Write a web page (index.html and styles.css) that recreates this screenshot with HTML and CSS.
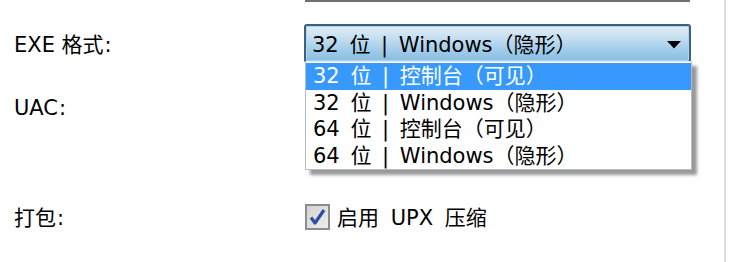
FILE: index.html
```html
<!DOCTYPE html>
<html lang="zh-CN">
<head>
<meta charset="utf-8">
<title>EXE 设置</title>
<link rel="stylesheet" href="styles.css">
</head>
<body>
<div class="panel">
  <div class="prev-field"></div>
  <div class="row row-exe">
    <span class="label">EXE 格式<span class="colon">:</span></span>
    <div class="select">
      <span class="select-value">32 位 | Windows（隐形）</span>
      <svg class="arrow" width="14" height="8" viewBox="0 0 14 8"><path d="M0 0H14L7 7.5Z" fill="#000"/></svg>
      <ul class="menu">
        <li class="item selected">32 位 | 控制台（可见）</li>
        <li class="item">32 位 | Windows（隐形）</li>
        <li class="item">64 位 | 控制台（可见）</li>
        <li class="item">64 位 | Windows（隐形）</li>
      </ul>
    </div>
  </div>
  <div class="row row-uac">
    <span class="label">UAC<span class="colon">:</span></span>
  </div>
  <div class="row row-pack">
    <span class="label">打包<span class="colon">:</span></span>
    <label class="check">
      <span class="box"><svg width="17" height="18" viewBox="0 0 17 18"><path d="M2 9.5L6 15L15 2" fill="none" stroke="#2c4f9e" stroke-width="3.2" stroke-linejoin="round"/></svg></span>
      <span class="check-text">启用 UPX 压缩</span>
    </label>
  </div>
</div>
</body>
</html>
```

FILE: styles.css
```css
html, body {
  margin: 0;
  padding: 0;
  background: #ffffff;
}
body {
  font-family: "DejaVu Sans", "Noto Sans CJK SC", sans-serif;
  font-size: 21px;
  line-height: 26px;
  color: #000;
}
.panel {
  width: 724px;
  height: 262px;
  border-right: 2px solid #d3dde7;
  box-sizing: content-box;
}
.prev-field {
  margin-left: 305px;
  width: 385px;
  height: 2px;
  background: #6f6f6f;
}
.row {
  display: grid;
  grid-template-columns: 290px 387px;
  align-items: center;
  height: 39px;
  padding-left: 14px;
}
.row-exe { margin-top: 22px; }
.row-uac { margin-top: 24px; }
.row-pack { margin-top: 71px; }
.label {
  white-space: nowrap;
  padding-top: 2px;
}
.colon {
  margin-left: 1px;
}
.select {
  position: relative;
  box-sizing: border-box;
  height: 39px;
  border: 2px solid #3a6383;
  border-radius: 3px;
  background: linear-gradient(#e2eff8 0%, #c4def0 35%, #a0cce9 70%, #86bde2 100%);
  box-shadow: inset 0 0 0 1px #b6d3e6;
  display: flex;
  align-items: center;
  padding-left: 6px;
  padding-right: 8px;
}
.select-value {
  flex: 1;
  white-space: nowrap;
  word-spacing: 4px;
  padding-top: 2px;
}
.arrow {
  margin-top: 3px;
}
.menu {
  position: absolute;
  top: 100%;
  left: -1px;
  width: 387px;
  box-sizing: border-box;
  margin: 0;
  padding: 1px 0 0;
  list-style: none;
  background: #fff;
  border: 1px solid #b4bccc;
  border-top-color: #dfe6ee;
  box-shadow: 5px 5px 3px rgba(0, 0, 0, 0.4);
}
.item {
  height: 26.6px;
  line-height: 27px;
  padding-left: 7px;
  white-space: nowrap;
  word-spacing: 4px;
}
.item.selected {
  background: #3899fd;
  color: #fff;
}
.check {
  display: flex;
  align-items: center;
  gap: 7px;
  margin-left: 1px;
}
.box {
  box-sizing: border-box;
  width: 25px;
  height: 26px;
  border: 2px solid #8c8c8c;
  background: linear-gradient(135deg, #d2d2d2, #eeeeee);
  display: flex;
  align-items: center;
  justify-content: center;
}
.check-text {
  white-space: nowrap;
  word-spacing: 5px;
  padding-top: 2px;
}
```
